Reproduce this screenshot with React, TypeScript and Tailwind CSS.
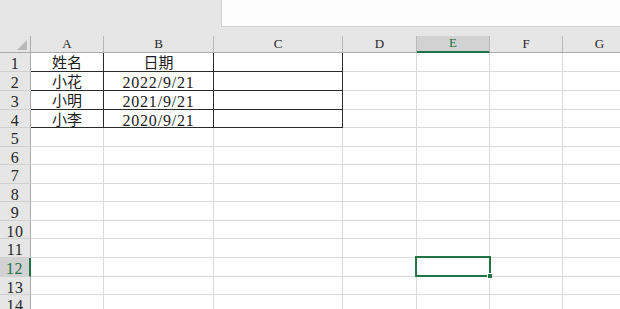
import React from 'react'

const cols = ['A', 'B', 'C', 'D', 'E', 'F', 'G']
const rows = [1, 2, 3, 4, 5, 6, 7, 8, 9, 10, 11, 12, 13, 14, 15]

const data: Record<string, string> = {
  A1: '姓名',
  B1: '日期',
  A2: '小花',
  B2: '2022/9/21',
  A3: '小明',
  B3: '2021/9/21',
  A4: '小李',
  B4: '2020/9/21',
}

const font = { fontFamily: '"Liberation Serif", "Noto Sans CJK SC", serif' }

function ColHeader({ label }: { label: string }) {
  const active = label === 'E'
  return (
    <div
      className={
        active
          ? 'flex items-end justify-center bg-[#d2d2d2] border-r border-r-[#b9b9b9] border-b-2 border-b-[#217346] text-[#217346] text-[13px] leading-[16px]'
          : 'flex items-end justify-center bg-[#e6e6e6] border-r border-r-[#b9b9b9] border-b border-b-[#ababab] text-[#262626] text-[13px] leading-[16px]'
      }
    >
      {label}
    </div>
  )
}

function RowHeader({ n }: { n: number }) {
  const active = n === 12
  return (
    <div
      className={
        active
          ? 'flex justify-center bg-[#d2d2d2] border-r-2 border-r-[#217346] border-b border-b-[#d0d0d0] text-[#217346] text-[16px] leading-[18px] pt-[2px] tracking-[0.5px]'
          : 'flex justify-center bg-[#e6e6e6] border-r border-r-[#ababab] border-b border-b-[#d0d0d0] text-[#262626] text-[16px] leading-[18px] pt-[2px] tracking-[0.5px]'
      }
    >
      {n}
    </div>
  )
}

function Cell({ col, row, ci }: { col: string; row: number; ci: number }) {
  const key = `${col}${row}`
  const inTable = row <= 4 && ci <= 2
  const text = data[key]
  const zh = ci === 0 || key === 'B1'
  return (
    <div
      className={
        inTable
          ? 'relative flex justify-center border-r border-b border-[#2a2a2a] bg-white text-[#1a1a1a]'
          : 'relative flex justify-center border-r border-b border-[#dadada] bg-white text-[#1a1a1a]'
      }
    >
      {text && (
        <span
          className={zh ? 'text-[15px] leading-[18px]' : 'text-[16px] leading-[18px] pt-[2px] tracking-[0.8px]'}
          style={zh ? { fontFamily: '"Noto Sans CJK SC", sans-serif' } : undefined}
        >
          {text}
        </span>
      )}
      {key === 'E12' && (
        <div className="absolute -left-[2px] -top-[2px] -right-[2px] -bottom-[1px] border-2 border-[#217346] z-10">
          <div className="absolute -right-[4px] -bottom-[4px] w-[6px] h-[6px] bg-[#217346] border border-white" />
        </div>
      )}
    </div>
  )
}

export default function App() {
  return (
    <div className="w-[620px] h-[309px] overflow-hidden bg-[#e6e6e6] select-none" style={font}>
      <div className="flex h-[36px]">
        <div className="w-[221px]" />
        <div className="flex-1 h-[27px] bg-[#fcfcfc] border-l border-b border-[#d0d0d0]" />
      </div>

      <div className="grid grid-cols-[31px_73px_110px_129px_74px_73px_73px_74px] grid-rows-[17px_19px_19px_19px_18px_19px_18px_19px_18px_19px_18px_19px_19px_18px_19px]">
        <div className="relative bg-[#e6e6e6] border-r border-r-[#ababab] border-b border-b-[#ababab]">
          <svg className="absolute left-[17px] top-[4px]" width="10" height="10" viewBox="0 0 10 10">
            <polygon points="10,0 10,10 0,10" fill="#b8b8b8" />
          </svg>
        </div>
        {cols.map((c) => (
          <ColHeader key={c} label={c} />
        ))}

        {rows.map((r) => (
          <React.Fragment key={r}>
            <RowHeader n={r} />
            {cols.map((c, ci) => (
              <Cell key={c} col={c} row={r} ci={ci} />
            ))}
          </React.Fragment>
        ))}
      </div>
    </div>
  )
}
